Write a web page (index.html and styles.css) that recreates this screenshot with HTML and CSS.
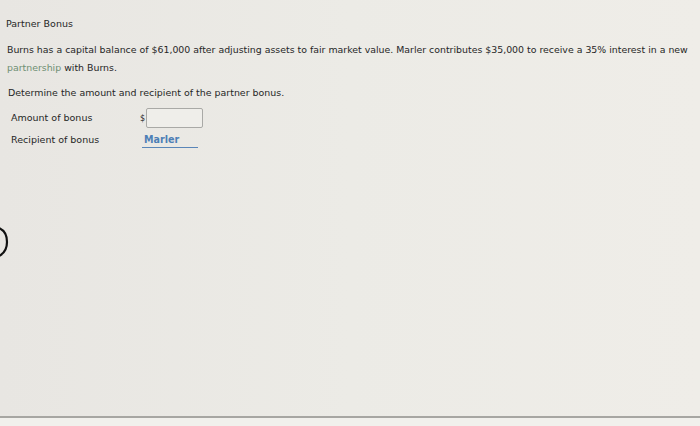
FILE: index.html
```html
<!DOCTYPE html>
<html>
<head>
<meta charset="utf-8">
<link rel="stylesheet" href="styles.css">
</head>
<body>
<div class="screen">
  <div class="content">
    <div class="title">Partner Bonus</div>
    <p class="problem">Burns has a capital balance of $61,000 after adjusting assets to fair market value. Marler contributes $35,000 to receive a 35% interest in a new <span class="term">partnership</span> with Burns.</p>
    <p class="task">Determine the amount and recipient of the partner bonus.</p>
    <div class="answers">
      <div class="label">Amount of bonus</div>
      <div class="field"><span class="dollar">$</span><span class="box"></span></div>
      <div class="label">Recipient of bonus</div>
      <div class="field"><span class="select">Marler</span></div>
    </div>
  </div>
  <svg class="paren" width="10" height="32" viewBox="0 0 10 32"><path d="M0 2 C7 5 8 12 8 16 C8 21 6 27 0 30" fill="none" stroke="#111" stroke-width="2.2"/></svg>
  <div class="bottom-edge"></div>
</div>
</body>
</html>
```
FILE: styles.css
```css
html, body { margin: 0; padding: 0; }
body {
  width: 700px; height: 426px; overflow: hidden;
  font-family: "DejaVu Sans", Verdana, sans-serif;
  color: #262626;
}
.screen {
  position: relative;
  width: 700px; height: 426px;
  background: linear-gradient(90deg, #e8e6e2 0%, #ecebe6 50%, #efede8 100%);
  display: flex; flex-direction: column;
}
.content { padding: 17px 0 0 6px; flex: 1; }
.title { font-size: 9.5px; line-height: 14px; }
.problem {
  margin: 10px 0 0 1px; font-size: 9.4px; line-height: 18px; width: 692px;
}
.term { color: #6f8f73; }
.task { margin: 9px 0 0 2px; font-size: 9.45px; line-height: 14px; }
.answers {
  margin: 8px 0 0 5px;
  display: grid; grid-template-columns: 129px auto; row-gap: 2px;
  align-items: center;
}
.label { font-size: 9.5px; line-height: 20px; }
.field { display: flex; align-items: center; height: 20px; }
.dollar { font-size: 8px; width: 6px; }
.box {
  width: 55px; height: 18px; border: 1px solid #a9a9a6; border-radius: 2px;
  background: #efeeea;
}
.select {
  margin-left: 2px; width: 54px; padding-left: 2px; font-weight: bold; color: #4d7fb6;
  font-size: 9.6px; line-height: 14px; border-bottom: 1.5px solid #5a86b8;
}
.paren { position: absolute; left: -1px; top: 226px; }
.bottom-edge {
  height: 8px; border-top: 2px solid #a7a6a2; background: #f1f0ec;
}
```
